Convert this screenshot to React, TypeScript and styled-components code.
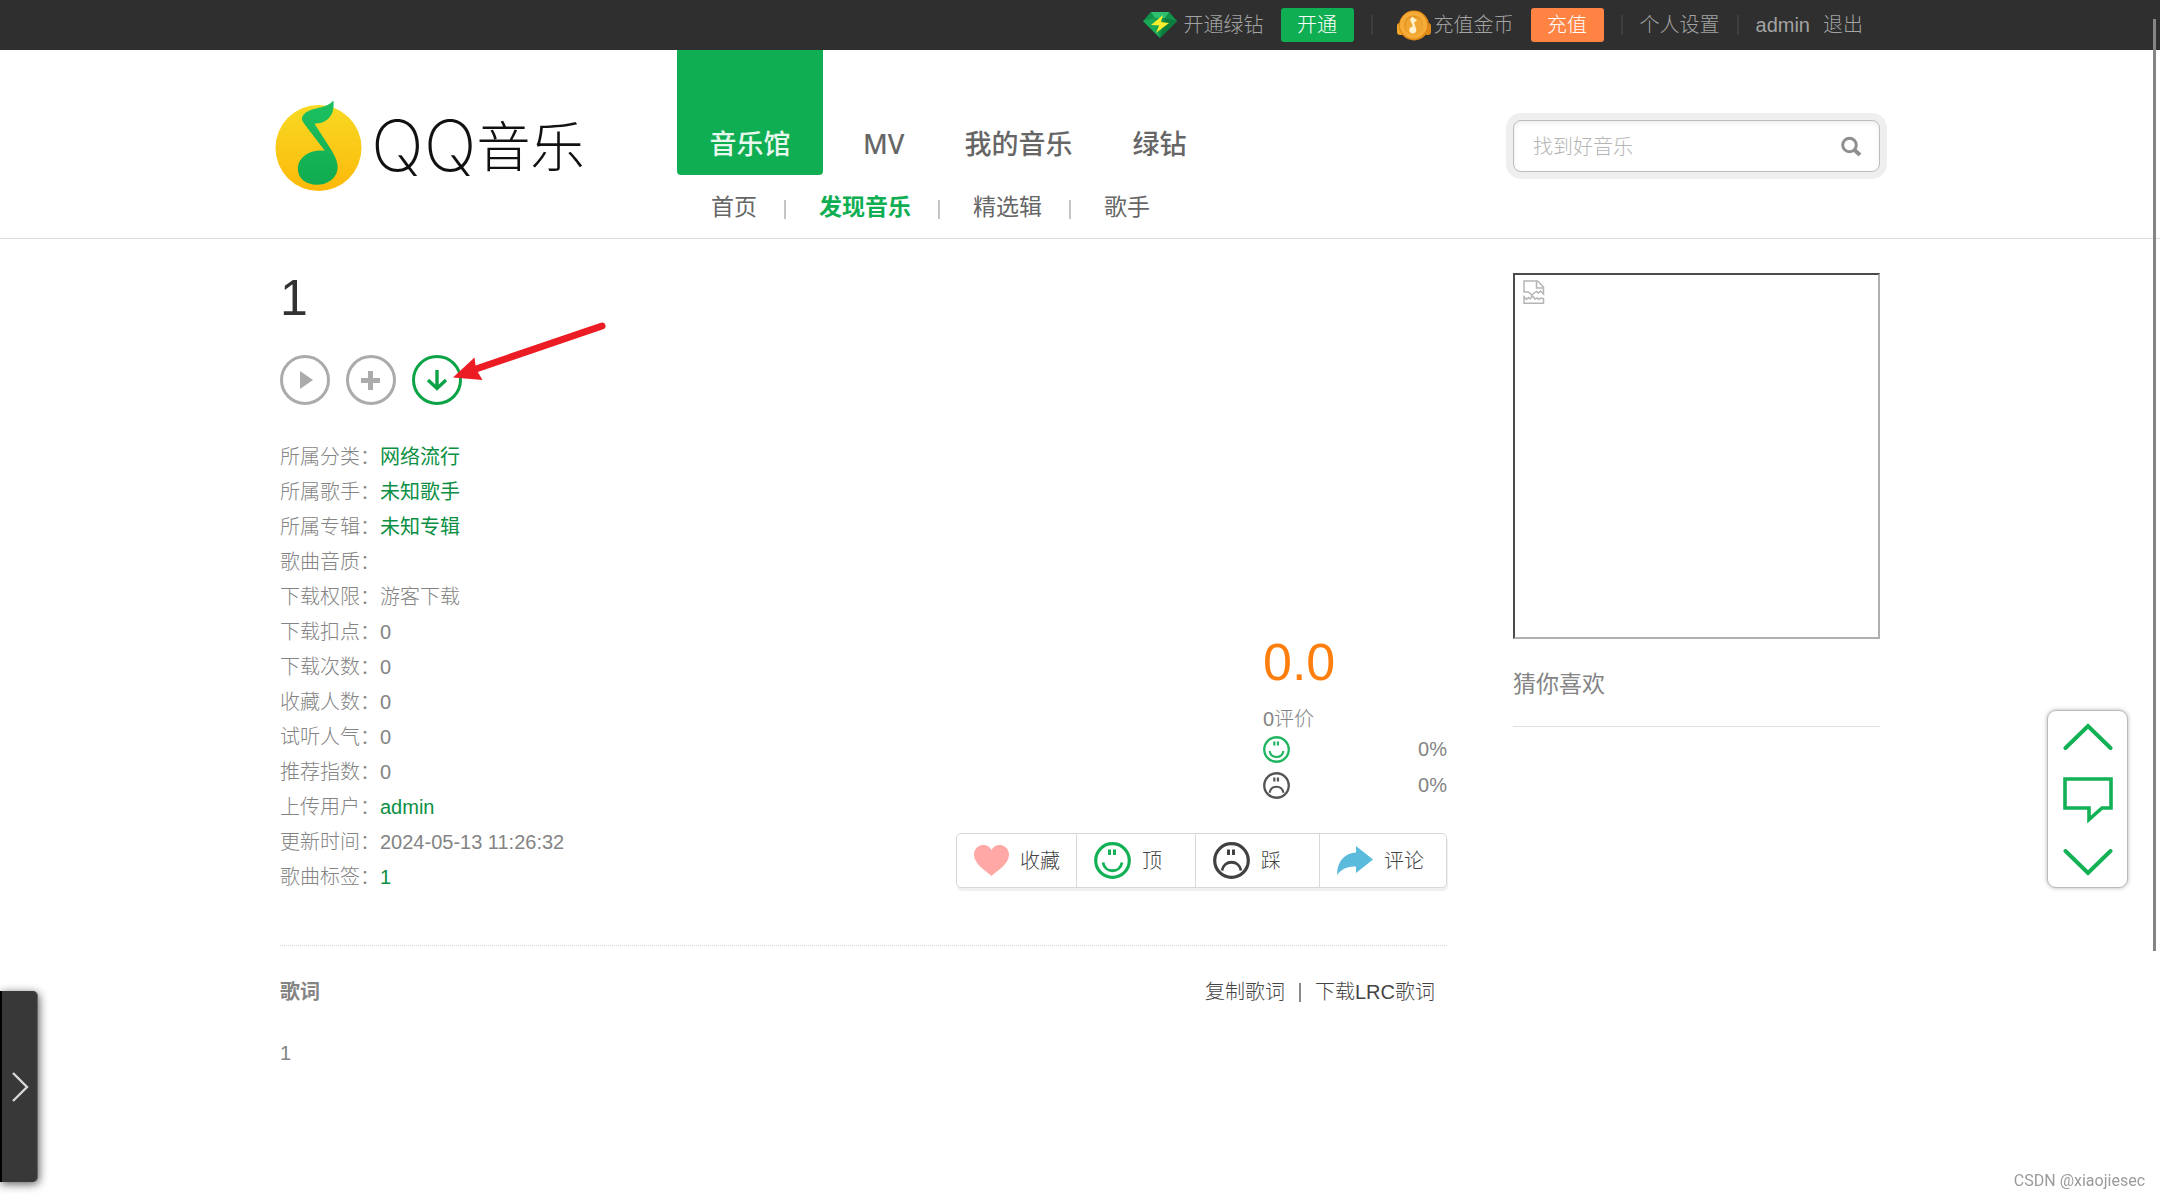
import React from "react";
import styled, { createGlobalStyle, css } from "styled-components";

const GREEN = "#0fae52";
const SANS = `"Liberation Sans", "Noto Sans CJK SC", sans-serif`;

const GlobalStyle = createGlobalStyle`
  *, *::before, *::after { box-sizing: border-box; }
  body {
    margin: 0;
    background: #fff;
    color: #848484;
    font-family: ${SANS};
    font-size: 20px;
    font-weight: 300;
    line-height: 30px;
  }
  h1, h2, p, dl, dd, dt, ul { margin: 0; padding: 0; font-weight: inherit; }
  ul { list-style: none; }
  a { color: inherit; text-decoration: none; }
  button, input { font: inherit; color: inherit; border: 0; padding: 0; background: none; }
  button { cursor: pointer; }
  svg { display: block; flex: none; }
`;

const Wrap = styled.div`
  width: 100%;
  max-width: 1600px;
  margin: 0 auto;
`;

const TopBar = styled.div`
  background: #2f2f2f;
  color: #a3a3a3;
`;

const TopInner = styled(Wrap)`
  display: flex;
  justify-content: flex-end;
  align-items: center;
  height: 50px;
  padding-right: 17px;
  white-space: nowrap;
`;

const TopItem = styled.div<{ $indent?: boolean; $gap: number }>`
  display: flex;
  align-items: center;
  gap: ${(p) => p.$gap}px;
  margin-left: ${(p) => (p.$indent ? 7 : 0)}px;
`;

const Pill = styled.button<{ $color: string }>`
  width: 73px;
  height: 34px;
  margin-left: 17px;
  border-radius: 3px;
  background: ${(p) => p.$color};
  color: #fff;
`;

const Divider = styled.span<{ $color: string; $margin: string; $h: number }>`
  width: 2px;
  height: ${(p) => p.$h}px;
  margin: ${(p) => p.$margin};
  background: ${(p) => p.$color};
`;

const Header = styled.header`
  border-bottom: 1px solid #dcdcdc;
`;

const HeaderInner = styled(Wrap)`
  display: flex;
  align-items: flex-start;
  height: 188px;
`;

const Logo = styled.a`
  display: flex;
  align-items: center;
  width: 402px;
  margin-left: -5px;
  padding-top: 51px;
  color: #111;
  white-space: nowrap;
`;

const LogoText = styled.span`
  margin-left: 9px;
  font-family: Inter, sans-serif;
  font-size: 70px;
  font-weight: 200;
  line-height: 90px;
`;

const LogoHan = styled.span`
  align-self: flex-start;
  font-family: "Noto Sans CJK SC", sans-serif;
  font-size: 54px;
  font-weight: 300;
  line-height: 86px;
`;

const NavArea = styled.div`
  flex: 1;
  white-space: nowrap;
`;

const MainNav = styled.nav`
  display: flex;
`;

const MainLink = styled.a<{ $active?: boolean }>`
  display: flex;
  align-items: flex-end;
  height: 125px;
  padding: 0 30px 13px;
  border-radius: 0 0 4px 4px;
  font-family: "Noto Sans", "Noto Sans CJK SC", sans-serif;
  font-size: 27px;
  font-weight: 500;
  line-height: 36px;
  color: #666;
  ${(p) =>
    p.$active &&
    css`
      width: 146px;
      justify-content: center;
      margin-right: 10px;
      background: ${GREEN};
      color: #e9f8ef;
    `}
`;

const SubNav = styled.nav`
  display: flex;
  align-items: center;
  padding: 17px 0 0 34px;
  font-size: 23px;
  font-weight: 400;
  color: #666;
`;

const SubLink = styled.a<{ $active?: boolean }>`
  ${(p) => p.$active && css`color: ${GREEN}; font-weight: 700;`}
`;

const SearchForm = styled.form`
  display: flex;
  align-items: center;
  width: 367px;
  height: 52px;
  margin-top: 70px;
  padding: 1px 17px 0 19px;
  border: 1px solid #bdbdbd;
  border-radius: 8px;
  background: #fff;
  box-shadow: 0 0 0 7px #efefef, inset 0 2px 5px #eee;
`;

const SearchInput = styled.input`
  flex: 1;
  min-width: 0;
  outline: none;
  &::placeholder { color: #b5b5b5; opacity: 1; }
`;

const Columns = styled(Wrap)`
  display: grid;
  grid-template-columns: minmax(0, 1fr) 367px;
  column-gap: 66px;
`;

const Song = styled.main`
  padding-top: 28px;
`;

const Title = styled.h1`
  font-size: 50px;
  line-height: 62px;
  color: #333;
`;

const PlayBar = styled.div`
  position: relative;
  display: flex;
  gap: 16px;
  margin-top: 26px;
`;

const RoundButton = styled.button`
  width: 50px;
  height: 50px;
`;

const Pointer = styled.svg`
  position: absolute;
  left: 170px;
  top: -36px;
`;

const Info = styled.section`
  display: flex;
  justify-content: space-between;
  align-items: flex-end;
  padding: 35px 0 50px;
  border-bottom: 1px dotted #d5d5d5;
`;

const Facts = styled.dl`
  display: grid;
  grid-template-columns: 100px auto;
  grid-auto-rows: 35px;
  line-height: 35px;
  white-space: nowrap;
`;

const FactLink = styled.a`
  color: #0c8f44;
  font-weight: 400;
`;

const Feedback = styled.div`
  width: 491px;
  padding-bottom: 7px;
`;

const Score = styled.div`
  width: 184px;
  margin: 0 0 30px auto;
`;

const ScoreValue = styled.p`
  margin-bottom: 15px;
  font-size: 52px;
  line-height: 60px;
  color: #ff7f0e;
`;

const ScoreCount = styled.p`
  line-height: 24px;
`;

const ScoreRow = styled.div`
  display: flex;
  justify-content: space-between;
  align-items: center;
  height: 36px;
`;

const Actions = styled.div`
  display: grid;
  grid-template-columns: 119px 119px 124px 1fr;
  height: 55px;
  border: 1px solid #d8d8d8;
  border-radius: 5px;
  box-shadow: 1px 3px 0 #f0f0f0;
`;

const Action = styled.button`
  display: flex;
  align-items: center;
  gap: 11px;
  padding-left: 17px;
  color: #444;
  & + & { border-left: 1px solid #d8d8d8; }
`;

const LyricsHead = styled.div`
  display: flex;
  justify-content: space-between;
  align-items: center;
  margin: 31px 0;
  padding-right: 12px;
`;

const LyricsTitle = styled.h2`
  font-size: 20px;
  font-weight: 700;
`;

const LyricsLinks = styled.div`
  display: flex;
  align-items: center;
  color: #444;
`;

const Side = styled.aside`
  padding-top: 34px;
`;

const Frame = styled.div`
  height: 366px;
  padding: 5px 8px;
  border: 2px solid;
  border-color: #4b4b4b #b0b0b0 #b0b0b0 #4b4b4b;
`;

const SideTitle = styled.h2`
  padding: 30px 0 27px;
  border-bottom: 1px solid #e0e0e0;
  font-size: 23px;
  font-weight: 400;
`;

const Float = styled.div`
  position: fixed;
  right: 32px;
  top: 710px;
  display: grid;
  justify-items: center;
  width: 81px;
  padding: 12px 0 11px;
  row-gap: 25px;
  border: 1px solid #bbb;
  border-radius: 9px;
  background: #fff;
  box-shadow: 0 0 4px rgba(0, 0, 0, 0.3);
`;

const FloatButton = styled.button`
  width: 50px;
`;

const DrawerTab = styled.button`
  position: fixed;
  left: 0;
  top: 991px;
  display: flex;
  align-items: center;
  width: 38px;
  height: 191px;
  padding-left: 9px;
  border-left: 2px solid #000;
  border-right: 1px solid #666;
  border-radius: 0 5px 5px 0;
  background: #383838;
  box-shadow: 1px 2px 10px rgba(0, 0, 0, 0.65);
`;

const ScrollThumb = styled.div`
  position: fixed;
  right: 4px;
  top: 19px;
  width: 3px;
  height: 932px;
  background: #858585;
`;

const Watermark = styled.p`
  position: fixed;
  right: 15px;
  bottom: 8px;
  font-family: Roboto, sans-serif;
  font-size: 16px;
  font-weight: 400;
  line-height: 20px;
  color: #9b9b9b;
`;

const Diamond = () => (
  <svg width="34" height="26" viewBox="0 0 34 26">
    <path d="M8 0h18l8 9-17 17L0 9z" fill="#12934a" />
    <path d="M8 0h18l-4 6H12z" fill="#2fc06f" />
    <path d="M0 9l12-3 5 20z" fill="#1aa857" />
    <path d="M34 9l-12-3-5 20z" fill="#0c7d3c" />
    <path d="M20 3l-12 10 8 .5L13 21l13-10-8-1z" fill="#f7ee2d" />
  </svg>
);

const Coin = () => (
  <svg width="34" height="31" viewBox="0 0 34 31">
    <rect x="0" y="13" width="7" height="12" rx="3" fill="#f0a526" />
    <rect x="27" y="13" width="7" height="12" rx="3" fill="#e0891a" />
    <circle cx="17" cy="15.500" r="15" fill="#e08a17" />
    <circle cx="16.500" cy="15" r="13.500" fill="#f6ac38" />
    <circle cx="16.500" cy="15" r="9.500" fill="#e2901f" />
    <circle cx="17" cy="15.800" r="8.800" fill="#f0a732" />
    <path d="M15 6.500l5 4-3 2 2 6a3.500 3.500 0 1 1-3-2l-3-7z" fill="#fff3cf" />
  </svg>
);

const LogoMark = () => (
  <svg width="87" height="90" viewBox="47 36 260 270">
    <defs>
      <linearGradient id="sun" x1="0" y1="0" x2="0" y2="1">
        <stop offset="0" stopColor="#f7d923" />
        <stop offset="1" stopColor="#fdb90a" />
      </linearGradient>
      <linearGradient id="note" x1="0" y1="0" x2="0" y2="1">
        <stop offset="0" stopColor="#1dc160" />
        <stop offset="1" stopColor="#10ab50" />
      </linearGradient>
    </defs>
    <circle cx="177" cy="177" r="129" fill="url(#sun)" />
    <path
      d="M219 36C203 62 136 52 127 88C127 95 132 101 137 108L196 185C150 181 115 205 115 240C116 270 140 288 175 287C212 286 238 260 234 228C232 211 224 197 215 182L165 104C197 104 226 86 222 37Z"
      fill="url(#note)"
    />
  </svg>
);

const SearchIcon = () => (
  <svg width="21" height="21" viewBox="0 0 21 21" fill="none" stroke="#8f8f8f">
    <circle cx="8.500" cy="9" r="6.800" strokeWidth="3" />
    <path d="M13.500 14l5.500 5" strokeWidth="4" />
  </svg>
);

const RoundIcon = ({ color, children }: { color: string; children: React.ReactNode }) => (
  <svg width="50" height="50" viewBox="0 0 50 50">
    <circle cx="25" cy="25" r="23.500" fill="none" stroke={color} strokeWidth="3" />
    {children}
  </svg>
);

const Face = ({ size, color, sad }: { size: number; color: string; sad?: boolean }) => (
  <svg width={size} height={size} viewBox="0 0 37 37" fill="none" stroke={color}>
    <circle cx="18.500" cy="18.500" r="16.800" strokeWidth="3.200" />
    <path d="M15.500 7.500v5.500M20.500 7.500v5.500" strokeWidth="3" />
    <path d={sad ? "M9 28.500c2-11 17-11 19 0" : "M9 20.500c2 11 17 11 19 0"} strokeWidth="2.800" />
  </svg>
);

const Heart = () => (
  <svg width="35" height="31" viewBox="0 0 35 31">
    <path d="M17.500 31C12 26 0 19 0 9.500C0 0 13-4 17.500 5C22-4 35 0 35 9.500C35 19 23 26 17.500 31z" fill="#ffa8a6" />
  </svg>
);

const Share = () => (
  <svg width="36" height="30" viewBox="0 0 36 30">
    <path d="M19 0l17 13.500L19 27v-6.500C9 20 4 24 0 29C0 15 8 7 19 6.500z" fill="#5bbbdd" />
  </svg>
);

const BrokenImage = () => (
  <svg width="22" height="24" viewBox="0 0 22 24" fill="none" stroke="#b5b5b5" strokeWidth="1.500">
    <path d="M3.500 12H1V1h13.500L20.500 7v7l-3-3-2 2-2-1.500-3 2-2 1.500-3-3z" />
    <path d="M13.500 1v7h7" />
    <path d="M1 23.200v-6.500l2.500 2.800 2-2 1.500 1.500 2.500-3 2.500 3 2.500-1 1.500 1.500 2-1.500 2.500.5v4.700z" />
  </svg>
);

const facts: { label: string; value: string; link?: boolean }[] = [
  { label: "所属分类", value: "网络流行", link: true },
  { label: "所属歌手", value: "未知歌手", link: true },
  { label: "所属专辑", value: "未知专辑", link: true },
  { label: "歌曲音质", value: "" },
  { label: "下载权限", value: "游客下载" },
  { label: "下载扣点", value: "0" },
  { label: "下载次数", value: "0" },
  { label: "收藏人数", value: "0" },
  { label: "试听人气", value: "0" },
  { label: "推荐指数", value: "0" },
  { label: "上传用户", value: "admin", link: true },
  { label: "更新时间", value: "2024-05-13 11:26:32" },
  { label: "歌曲标签", value: "1", link: true },
];

const subLinks = ["首页", "发现音乐", "精选辑", "歌手"];

export default function App() {
  return (
    <>
      <GlobalStyle />
      <TopBar>
        <TopInner>
          <TopItem $gap={7}>
            <Diamond />
            <a href="#vip">开通绿钻</a>
          </TopItem>
          <Pill $color={GREEN}>开通</Pill>
          <Divider $color="#3d3d3d" $margin="0 17px" $h={20} />
          <TopItem $gap={3} $indent>
            <Coin />
            <a href="#coins">充值金币</a>
          </TopItem>
          <Pill $color="#ff8444">充值</Pill>
          <Divider $color="#3d3d3d" $margin="0 17px" $h={20} />
          <a href="#settings">个人设置</a>
          <Divider $color="#3d3d3d" $margin="0 17px" $h={20} />
          <TopItem $gap={13}>
            <a href="#admin">admin</a>
            <a href="#logout">退出</a>
          </TopItem>
        </TopInner>
      </TopBar>

      <Header>
        <HeaderInner>
          <Logo href="#home">
            <LogoMark />
            <LogoText>QQ</LogoText>
            <LogoHan>音乐</LogoHan>
          </Logo>
          <NavArea>
            <MainNav>
              <MainLink href="#hall" $active>音乐馆</MainLink>
              <MainLink href="#mv">MV</MainLink>
              <MainLink href="#mine">我的音乐</MainLink>
              <MainLink href="#green">绿钻</MainLink>
            </MainNav>
            <SubNav>
              {subLinks.map((name, i) => (
                <React.Fragment key={name}>
                  {i > 0 && <Divider $color="#c4c4c4" $margin="4px 33px 0 27px" $h={19} />}
                  <SubLink href={`#sub${i}`} $active={i === 1}>{name}</SubLink>
                </React.Fragment>
              ))}
            </SubNav>
          </NavArea>
          <SearchForm>
            <SearchInput type="text" aria-label="找到好音乐" placeholder="找到好音乐" />
            <button type="button" aria-label="搜索">
              <SearchIcon />
            </button>
          </SearchForm>
        </HeaderInner>
      </Header>

      <Columns>
        <Song>
          <Title>1</Title>
          <PlayBar>
            <RoundButton aria-label="播放">
              <RoundIcon color="#ababab">
                <path d="M20 16l13 9-13 9z" fill="#ababab" />
              </RoundIcon>
            </RoundButton>
            <RoundButton aria-label="添加">
              <RoundIcon color="#ababab">
                <path d="M24.500 16v19M15 25.500h19" stroke="#ababab" strokeWidth="5" />
              </RoundIcon>
            </RoundButton>
            <RoundButton aria-label="下载">
              <RoundIcon color="#0ca347">
                <path d="M25 15v18M16 25l9 8.500 9-8.500" fill="none" stroke="#0ca347" strokeWidth="3.400" />
              </RoundIcon>
            </RoundButton>
            <Pointer width="160" height="70" viewBox="450 319 160 70" aria-hidden="true">
              <path d="M473 370L602 326" stroke="#ec1c24" strokeWidth="7" strokeLinecap="round" />
              <path d="M453 377.500L474.500 357.500L476 369L482.500 380z" fill="#ec1c24" />
            </Pointer>
          </PlayBar>

          <Info>
            <Facts>
              {facts.map((f) => (
                <React.Fragment key={f.label}>
                  <dt>{f.label}：</dt>
                  <dd>{f.link ? <FactLink href={`#${f.label}`}>{f.value}</FactLink> : f.value}</dd>
                </React.Fragment>
              ))}
            </Facts>
            <Feedback>
              <Score>
                <ScoreValue>0.0</ScoreValue>
                <ScoreCount>0评价</ScoreCount>
                <ScoreRow>
                  <Face size={27} color="#22b561" />
                  0%
                </ScoreRow>
                <ScoreRow>
                  <Face size={27} color="#555" sad />
                  0%
                </ScoreRow>
              </Score>
              <Actions>
                <Action><Heart />收藏</Action>
                <Action><Face size={37} color="#12b155" />顶</Action>
                <Action><Face size={37} color="#434041" sad />踩</Action>
                <Action><Share />评论</Action>
              </Actions>
            </Feedback>
          </Info>

          <LyricsHead>
            <LyricsTitle>歌词</LyricsTitle>
            <LyricsLinks>
              <a href="#copy">复制歌词</a>
              <Divider $color="#8a8a8a" $margin="0 14px" $h={19} />
              <a href="#lrc">下载LRC歌词</a>
            </LyricsLinks>
          </LyricsHead>
          <p>1</p>
        </Song>

        <Side>
          <Frame>
            <BrokenImage />
          </Frame>
          <SideTitle>猜你喜欢</SideTitle>
        </Side>
      </Columns>

      <Float>
        <FloatButton aria-label="返回顶部">
          <svg width="50" height="28" viewBox="0 0 50 28" fill="none" stroke="#12b155" strokeWidth="4" strokeLinecap="round">
            <path d="M2.500 25L25 3l22.500 22" />
          </svg>
        </FloatButton>
        <FloatButton aria-label="评论">
          <svg width="50" height="47" viewBox="0 0 50 47" fill="none" stroke="#12b155" strokeWidth="3.600">
            <path d="M2 3h46v29h-9L26 43.500V32H2z" />
          </svg>
        </FloatButton>
        <FloatButton aria-label="返回底部">
          <svg width="50" height="28" viewBox="0 0 50 28" fill="none" stroke="#12b155" strokeWidth="4" strokeLinecap="round">
            <path d="M2.500 3L25 25 47.500 3" />
          </svg>
        </FloatButton>
      </Float>

      <DrawerTab aria-label="展开播放器">
        <svg width="20" height="32" viewBox="0 0 20 32" fill="none" stroke="#d8d8d8" strokeWidth="2.400">
          <path d="M2 2l14 14L2 30" />
        </svg>
      </DrawerTab>
      <ScrollThumb />
      <Watermark>CSDN @xiaojiesec</Watermark>
    </>
  );
}
